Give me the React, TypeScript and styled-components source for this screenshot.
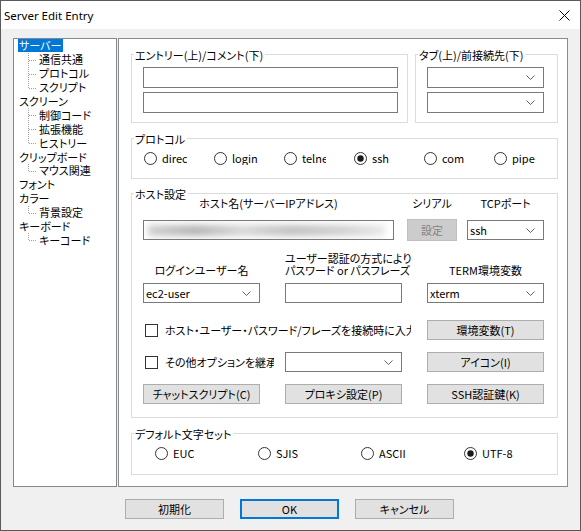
import React from 'react';
import styled, { createGlobalStyle } from 'styled-components';

const GlobalStyle = createGlobalStyle`
  html, body {
    margin: 0;
    padding: 0;
    background: #ffffff;
  }
  body {
    font-family: "Noto Sans CJK JP", sans-serif;
    font-size: 11px;
    color: #000;
    font-feature-settings: "palt";
  }
`;

const Window = styled.div`
  width: 581px;
  height: 531px;
  box-sizing: border-box;
  border: 1px solid #5a5a5a;
  background: #f0f0f0;
  display: flex;
  flex-direction: column;
`;

const TitleBar = styled.div`
  height: 28px;
  flex: none;
  background: #fff;
  display: flex;
  align-items: center;
  justify-content: space-between;
  padding: 0 10px 0 3px;
  font-family: "Noto Sans", sans-serif;
  font-feature-settings: normal;
  font-size: 11.5px;
`;

const Body = styled.div`
  padding: 9px 0 0 12px;
  display: flex;
  flex-direction: column;
`;

const Main = styled.div`
  display: flex;
  gap: 1px;
  height: 449px;
`;

const Tree = styled.ul`
  list-style: none;
  margin: 0;
  width: 104px;
  box-sizing: border-box;
  border: 1px solid #828790;
  background: #fff;
  padding: 0 0 0 4px;
`;

const TreeRow = styled.li<{ $child?: boolean }>`
  height: 13.9px;
  display: flex;
  align-items: center;
  line-height: 13px;
  white-space: nowrap;
  padding-left: ${(p) => (p.$child ? '10px' : '0')};
`;

const TreeText = styled.span<{ $selected?: boolean }>`
  background: ${(p) => (p.$selected ? '#0078d7' : 'transparent')};
  color: ${(p) => (p.$selected ? '#fff' : '#000')};
  padding: 0 2px 0 1px;
`;

const Connector = styled.svg`
  flex: none;
  margin-right: 1px;
`;

const Panel = styled.div`
  width: 450px;
  box-sizing: border-box;
  border: 1px solid #8c8c8c;
  background: #fff;
  padding: 15px 0 0 12px;
  display: flex;
  flex-direction: column;
`;

const TopRow = styled.div`
  display: flex;
  gap: 7px;
`;

const Group = styled.div<{ $w: number; $h: number; $top?: number }>`
  width: ${(p) => p.$w}px;
  height: ${(p) => p.$h}px;
  box-sizing: border-box;
  border: 1px solid #dcdcdc;
  margin-top: ${(p) => p.$top ?? 0}px;
  flex: none;
`;

const GroupTitle = styled.div`
  width: fit-content;
  margin: -7px 0 -7px 2px;
  padding: 0 2px 0 1px;
  background: #fff;
  line-height: 14px;
  white-space: nowrap;
`;

const GroupBody = styled.div<{ $pad: string }>`
  padding: ${(p) => p.$pad};
  display: flex;
  flex-direction: column;
`;

const Field = styled.div<{ $w: number; $h?: number }>`
  width: ${(p) => p.$w}px;
  height: ${(p) => p.$h ?? 21}px;
  box-sizing: border-box;
  border: 1px solid #7a7a7a;
  background: #fff;
  overflow: hidden;
`;

const Blur = styled.div`
  margin: 4px 8px 0 4px;
  height: 11px;
  filter: blur(3px);
  background: linear-gradient(
    90deg,
    rgba(170, 170, 170, 0.55) 0%,
    rgba(150, 150, 150, 0.7) 20%,
    rgba(185, 185, 185, 0.55) 40%,
    rgba(160, 160, 160, 0.65) 60%,
    rgba(175, 175, 175, 0.6) 80%,
    rgba(200, 200, 200, 0.4) 100%
  );
`;

const Combo = styled.div<{ $w: number; $h?: number }>`
  width: ${(p) => p.$w}px;
  height: ${(p) => p.$h ?? 21}px;
  box-sizing: border-box;
  border: 1px solid #7a7a7a;
  background: #fff;
  display: flex;
  align-items: center;
  justify-content: space-between;
  padding: 0 8px 0 2px;
  line-height: 14px;
`;

const Stack = styled.div<{ $gap: number }>`
  display: flex;
  flex-direction: column;
  gap: ${(p) => p.$gap}px;
`;

const RadioRow = styled.div`
  display: flex;
  height: 14px;
  align-items: center;
`;

const RadioItem = styled.div<{ $w: number }>`
  width: ${(p) => p.$w}px;
  display: flex;
  align-items: center;
  gap: 5px;
  flex: none;
`;

const RadioLabel = styled.span<{ $max?: number }>`
  max-width: ${(p) => (p.$max ? `${p.$max}px` : 'none')};
  overflow: hidden;
  white-space: nowrap;
  line-height: 14px;
`;

const HostTop = styled.div`
  display: grid;
  grid-template-columns: 251px 13px 50px 10px 77px;
  grid-template-rows: 14px 22px;
  grid-template-areas:
    'hl . sl . pl'
    'hf . sb . pf';
  row-gap: 9px;
  align-items: center;
`;

const Cell = styled.div<{ $area: string }>`
  grid-area: ${(p) => p.$area};
  text-align: center;
  line-height: 14px;
  white-space: nowrap;
  display: flex;
  justify-content: center;
`;

const ColRow = styled.div<{ $top: number; $h: number }>`
  display: grid;
  grid-template-columns: 117px 117px 117px;
  column-gap: 25px;
  height: ${(p) => p.$h}px;
  margin-top: ${(p) => p.$top}px;
  align-items: end;
`;

const ColLabel = styled.div`
  text-align: center;
  line-height: 12px;
  white-space: nowrap;
`;

const CheckField = styled.div<{ $w: number; $span?: boolean }>`
  width: ${(p) => p.$w}px;
  grid-column: ${(p) => (p.$span ? '1 / 3' : 'auto')};
  align-self: center;
  display: flex;
  align-items: center;
  gap: 7px;
  padding-left: 2px;
  box-sizing: border-box;
  overflow: hidden;
  white-space: nowrap;
  line-height: 14px;
`;

const CheckBox = styled.span`
  flex: none;
  width: 13px;
  height: 13px;
  box-sizing: border-box;
  border: 1px solid #333;
  background: #fff;
`;

const Button = styled.div<{ $w?: number; $disabled?: boolean; $default?: boolean }>`
  width: ${(p) => (p.$w ? `${p.$w}px` : '100%')};
  height: ${(p) => (p.$disabled ? 22 : 20)}px;
  box-sizing: border-box;
  border: ${(p) =>
    p.$default ? '2px solid #0078d7' : p.$disabled ? '1px solid #bfbfbf' : '1px solid #adadad'};
  background: ${(p) => (p.$disabled ? '#cccccc' : '#e1e1e1')};
  color: ${(p) => (p.$disabled ? '#838383' : '#000')};
  display: flex;
  align-items: center;
  justify-content: center;
  line-height: 14px;
  white-space: nowrap;
`;

const FooterRow = styled.div`
  display: flex;
  gap: 16px;
  margin-top: 12px;
  padding-left: 112px;
`;

const Chevron = () => (
  <svg width="9" height="5" viewBox="0 0 9 5">
    <polyline points="0.5,0.5 4.5,4.5 8.5,0.5" fill="none" stroke="#606060" strokeWidth="1" />
  </svg>
);

const Radio = ({ checked }: { checked?: boolean }) => (
  <svg width="13" height="13" viewBox="0 0 13 13" style={{ flex: 'none' }}>
    <circle cx="6.5" cy="6.5" r="6" fill="#fff" stroke="#333" strokeWidth="1" />
    {checked && <circle cx="6.5" cy="6.5" r="3.2" fill="#1a1a1a" />}
  </svg>
);

type TreeItem = { label: string; child?: boolean; last?: boolean; selected?: boolean };

const treeItems: TreeItem[] = [
  { label: 'サーバー', selected: true },
  { label: '通信共通', child: true },
  { label: 'プロトコル', child: true },
  { label: 'スクリプト', child: true, last: true },
  { label: 'スクリーン' },
  { label: '制御コード', child: true },
  { label: '拡張機能', child: true },
  { label: 'ヒストリー', child: true, last: true },
  { label: 'クリップボード' },
  { label: 'マウス関連', child: true, last: true },
  { label: 'フォント' },
  { label: 'カラー' },
  { label: '背景設定', child: true, last: true },
  { label: 'キーボード' },
  { label: 'キーコード', child: true, last: true },
];

const protocols = [
  { label: 'direct', max: 25 },
  { label: 'login', max: 28 },
  { label: 'telnet', max: 24 },
  { label: 'ssh', max: 28, checked: true },
  { label: 'com', max: 28 },
  { label: 'pipe', max: 28 },
];

const charsets = [
  { label: 'EUC' },
  { label: 'SJIS' },
  { label: 'ASCII' },
  { label: 'UTF-8', checked: true },
];

export default function App() {
  return (
    <>
      <GlobalStyle />
      <Window>
        <TitleBar>
          <span>Server Edit Entry</span>
          <svg width="11" height="11" viewBox="0 0 11 11">
            <line x1="0.5" y1="0.5" x2="10.5" y2="10.5" stroke="#000" strokeWidth="1" />
            <line x1="10.5" y1="0.5" x2="0.5" y2="10.5" stroke="#000" strokeWidth="1" />
          </svg>
        </TitleBar>
        <Body>
          <Main>
            <Tree>
              {treeItems.map((item) => (
                <TreeRow key={item.label} $child={item.child}>
                  {item.child && (
                    <Connector width="9" height="14" viewBox="0 0 9 14">
                      <line
                        x1="0.5"
                        y1="0"
                        x2="0.5"
                        y2={item.last ? 7 : 14}
                        stroke="#a0a0a0"
                        strokeDasharray="1 1"
                      />
                      <line x1="1" y1="7.5" x2="9" y2="7.5" stroke="#a0a0a0" strokeDasharray="1 1" />
                    </Connector>
                  )}
                  <TreeText $selected={item.selected}>{item.label}</TreeText>
                </TreeRow>
              ))}
            </Tree>
            <Panel>
              <TopRow>
                <Group $w={277} $h={69}>
                  <GroupTitle>エントリー(上)/コメント(下)</GroupTitle>
                  <GroupBody $pad="12px 0 0 11px">
                    <Stack $gap={4}>
                      <Field $w={255} />
                      <Field $w={255} />
                    </Stack>
                  </GroupBody>
                </Group>
                <Group $w={143} $h={69}>
                  <GroupTitle>タブ(上)/前接続先(下)</GroupTitle>
                  <GroupBody $pad="12px 0 0 11px">
                    <Stack $gap={4}>
                      <Combo $w={117}>
                        <span />
                        <Chevron />
                      </Combo>
                      <Combo $w={117}>
                        <span />
                        <Chevron />
                      </Combo>
                    </Stack>
                  </GroupBody>
                </Group>
              </TopRow>

              <Group $w={427} $h={41} $top={15}>
                <GroupTitle>プロトコル</GroupTitle>
                <GroupBody $pad="12px 0 0 12px">
                  <RadioRow>
                    {protocols.map((p) => (
                      <RadioItem key={p.label} $w={70}>
                        <Radio checked={p.checked} />
                        <RadioLabel $max={p.max}>{p.label}</RadioLabel>
                      </RadioItem>
                    ))}
                  </RadioRow>
                </GroupBody>
              </Group>

              <Group $w={427} $h={225} $top={14}>
                <GroupTitle>ホスト設定</GroupTitle>
                <GroupBody $pad="2px 0 0 11px">
                  <HostTop>
                    <Cell $area="hl">ホスト名(サーバーIPアドレス)</Cell>
                    <Cell $area="sl">シリアル</Cell>
                    <Cell $area="pl">TCPポート</Cell>
                    <Cell $area="hf">
                      <Field $w={251} $h={20}>
                        <Blur />
                      </Field>
                    </Cell>
                    <Cell $area="sb">
                      <Button $w={50} $disabled>
                        設定
                      </Button>
                    </Cell>
                    <Cell $area="pf">
                      <Combo $w={77} $h={20}>
                        <span>ssh</span>
                        <Chevron />
                      </Combo>
                    </Cell>
                  </HostTop>

                  <ColRow $top={11} $h={24}>
                    <ColLabel>ログインユーザー名</ColLabel>
                    <ColLabel>
                      ユーザー認証の方式により
                      <br />
                      パスワード or パスフレーズ
                    </ColLabel>
                    <ColLabel>TERM環境変数</ColLabel>
                  </ColRow>

                  <ColRow $top={7} $h={20}>
                    <Combo $w={117} $h={20}>
                      <span>ec2-user</span>
                      <Chevron />
                    </Combo>
                    <Field $w={117} $h={20} />
                    <Combo $w={117} $h={20}>
                      <span>xterm</span>
                      <Chevron />
                    </Combo>
                  </ColRow>

                  <ColRow $top={17} $h={20}>
                    <CheckField $w={268} $span>
                      <CheckBox />
                      <span>ホスト・ユーザー・パスワード/フレーズを接続時に入力</span>
                    </CheckField>
                    <Button>環境変数(T)</Button>
                  </ColRow>

                  <ColRow $top={12} $h={20}>
                    <CheckField $w={131}>
                      <CheckBox />
                      <span>その他オプションを継承</span>
                    </CheckField>
                    <Combo $w={117} $h={20}>
                      <span />
                      <Chevron />
                    </Combo>
                    <Button>アイコン(I)</Button>
                  </ColRow>

                  <ColRow $top={12} $h={20}>
                    <Button>チャットスクリプト(C)</Button>
                    <Button>プロキシ設定(P)</Button>
                    <Button>SSH認証鍵(K)</Button>
                  </ColRow>
                </GroupBody>
              </Group>

              <Group $w={427} $h={42} $top={15}>
                <GroupTitle>デフォルト文字セット</GroupTitle>
                <GroupBody $pad="12px 0 0 23px">
                  <RadioRow>
                    {charsets.map((c) => (
                      <RadioItem key={c.label} $w={103}>
                        <Radio checked={c.checked} />
                        <RadioLabel>{c.label}</RadioLabel>
                      </RadioItem>
                    ))}
                  </RadioRow>
                </GroupBody>
              </Group>
            </Panel>
          </Main>
          <FooterRow>
            <Button $w={99}>初期化</Button>
            <Button $w={99} $default>
              OK
            </Button>
            <Button $w={99}>キャンセル</Button>
          </FooterRow>
        </Body>
      </Window>
    </>
  );
}
